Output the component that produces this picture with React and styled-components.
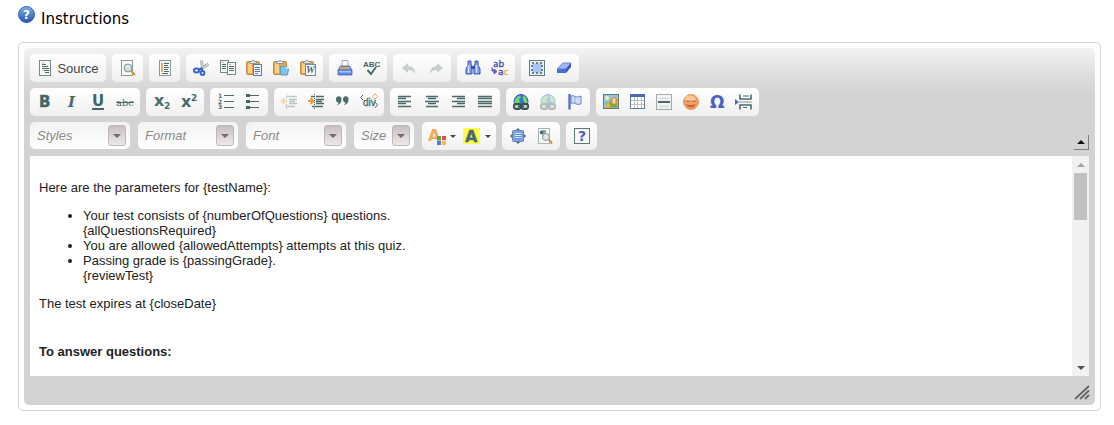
import React from "react";
import styled, { createGlobalStyle } from "styled-components";

const teal = "#4b6b6b";
const darkTeal = "#426565";
const sans = '"DejaVu Sans", Verdana, sans-serif';

const Icon = ({ children, wide, faded }) => (
  <svg
    width={wide ? 18 : 16}
    height="16"
    viewBox={wide ? "0 0 18 16" : "0 0 16 16"}
    opacity={faded ? 0.35 : 1}
    aria-hidden="true"
  >
    {children}
  </svg>
);

const Lines = ({ d, color = teal, w = 1 }) => (
  <path d={d} stroke={color} strokeWidth={w} fill="none" />
);

const Page = ({ x = 2, y = 0, w = 12, h = 16, stroke = "#8a9a9a" }) => (
  <rect x={x + 0.5} y={y + 0.5} width={w - 1} height={h - 1} fill="#f4f8f8" stroke={stroke} />
);

const Clipboard = () => (
  <>
    <rect x="0.5" y="1.5" width="13" height="13" rx="1.5" fill="#e8a44c" stroke="#c98a3c" />
    <path d="M2 3h4v10H2z" fill="#f9cf8f" />
    <path d="M3.5 3.500V1.500h1.500q2-2.500 4 0h1.500v2z" fill="#dfe3e6" stroke="#7f8c8c" strokeWidth="0.8" />
  </>
);

const Globe = () => (
  <>
    <circle cx="8" cy="7.5" r="7" fill="#3d6fd0" stroke="#34559b" />
    <path d="M1.500 8q0-5 5.500-6.500l1 2-2 2 1 2-2 3H2z" fill="#67d86a" />
    <path d="M10 1l3.500 3 1 4-2 2-2.500-4z" fill="#67d86a" />
    <rect x="0.8" y="10" width="7" height="5" rx="2.2" fill="#b9c6c6" stroke="#37504f" strokeWidth="1.8" />
    <rect x="8.2" y="10" width="7" height="5" rx="2.2" fill="#b9c6c6" stroke="#37504f" strokeWidth="1.8" />
    <path d="M5 12.500h6" stroke="#37504f" strokeWidth="1.8" />
  </>
);

const icons = {
  source: (
    <Icon>
      <Page x={2} w={12} stroke="#788b8b" />
      <Lines d="M5 4.500h4M5 6.500h6M5 8.500h7M7 10.500h5M8 12.500h4" />
      <Lines d="M5 3h2M5 10.500h1" color="#d9a45b" />
    </Icon>
  ),
  preview: (
    <Icon>
      <Page x={1} w={12} />
      <circle cx="8" cy="8" r="4" fill="#d3dadb" stroke="#87989b" />
      <path d="M6.500 7q1.500-2 3 0" stroke="#fff" fill="none" />
      <path d="M11 11l4 4" stroke="#cf8b3a" strokeWidth="2" />
    </Icon>
  ),
  templates: (
    <Icon>
      <Page x={2} w={12} />
      <Lines d="M7 3.500h5M7 5.500h4M7 7.500h5M7 9.500h4M7 11.500h5M5 13.500h6" />
      <Lines d="M5 3v9" color="#efa95a" w={2} />
    </Icon>
  ),
  cut: (
    <Icon>
      <path d="M8.500 0.500l1 7.500M15.500 4L7 9.500" stroke="#9ea8ab" strokeWidth="3" fill="none" />
      <path d="M8.500 1l1 7M15 4.500L8 9" stroke="#dde2e3" strokeWidth="1.2" fill="none" />
      <ellipse cx="3.500" cy="10.5" rx="2.600" ry="1.900" stroke="#3b64cc" strokeWidth="2" fill="none" />
      <ellipse cx="9.500" cy="13" rx="1.900" ry="2" stroke="#3b64cc" strokeWidth="2" fill="none" />
      <path d="M5.500 9.500l3.500-1v3" stroke="#3b64cc" strokeWidth="2" fill="none" />
    </Icon>
  ),
  copy: (
    <Icon>
      <Page x={0} y={0} w={9} h={13} stroke="#738787" />
      <Lines d="M2 4.500h4M2 6.500h4M2 8.500h4" />
      <Page x={7} y={2} w={9} h={13} stroke="#738787" />
      <Lines d="M9 6.500h5M9 8.500h5M9 10.500h5" />
      <Lines d="M2 2.500h2M9 4.500h2" color="#e6aa61" />
    </Icon>
  ),
  paste: (
    <Icon>
      <Clipboard />
      <rect x="7.5" y="4.5" width="8" height="11" fill="#f7f9ff" stroke="#5476c9" />
      <Lines d="M9 7.500h5M9 9.500h5M9 11.500h5M9 13.500h3" color="#5773b8" />
    </Icon>
  ),
  pasteText: (
    <Icon>
      <Clipboard />
      <path d="M7 7l5-1 3.500 3-1 6H8z" fill="#7dc5e8" stroke="#539dc8" />
      <path d="M12 6l1 3h3" fill="#c4e7f7" />
    </Icon>
  ),
  pasteWord: (
    <Icon>
      <Clipboard />
      <rect x="5.5" y="4.5" width="10" height="11" fill="#f7f9ff" stroke="#7187b5" />
      <text x="6" y="13" fontFamily="Liberation Serif, serif" fontWeight="bold" fontStyle="italic" fontSize="10" fill={teal}>W</text>
    </Icon>
  ),
  print: (
    <Icon>
      <path d="M5 7V0.500h6V7" fill="#f7f9fb" stroke="#a4aebd" />
      <path d="M3.500 6h9l2.500 4v5H1v-5z" fill="#5c87e6" stroke="#4267bd" strokeWidth="0.8" />
      <path d="M3 7h10v2H3z" fill="#f0a545" />
      <path d="M2 11h12v1.500H2z" fill="#a6c4ff" />
    </Icon>
  ),
  spell: (
    <Icon wide>
      <text x="0" y="7" fontFamily="Liberation Sans, sans-serif" fontWeight="bold" fontSize="8" fill={darkTeal}>ABC</text>
      <path d="M4.500 10l3.500 4 5-7" stroke={teal} strokeWidth="2" fill="none" />
    </Icon>
  ),
  undo: (
    <Icon faded>
      <path d="M1 8l6-5v3q7 0 7 8-2-4-7-4v3z" fill="#6d8080" />
    </Icon>
  ),
  redo: (
    <Icon faded>
      <path d="M15 8L9 3v3q-7 0-7 8 2-4 7-4v3z" fill="#6d8080" />
    </Icon>
  ),
  find: (
    <Icon>
      <path d="M3 1h3v3l1 2v8H1V9l2-4zM10 1h3v4l2 4v5H9V6l1-2z" fill="#7c9df0" stroke="#3a56ac" />
      <path d="M6 6h4v3H6z" fill="#3a56ac" />
      <path d="M3.500 5v8M11.500 5v8" stroke="#d3e1ff" strokeWidth="1.5" />
    </Icon>
  ),
  replace: (
    <Icon wide>
      <text x="2" y="7" fontFamily={sans} fontSize="9" fill="#4549b5" stroke="#4549b5" strokeWidth="0.3">ab</text>
      <text x="7" y="15" fontFamily={sans} fontSize="9" fill="#4549b5" stroke="#4549b5" strokeWidth="0.3">a<tspan fill="#f0a545" stroke="#f0a545">c</tspan></text>
      <path d="M1 7.500v3.500h2M3 9l3 2.500L3 14z" stroke="#5b5fc2" fill="#5b5fc2" />
    </Icon>
  ),
  selectAll: (
    <Icon>
      <rect x="0.5" y="0.5" width="15" height="15" fill="#e9eeee" stroke="#637c7c" />
      <rect x="3.5" y="3.5" width="9" height="9" fill="#a9c4f4" />
      <rect x="3" y="3" width="10" height="10" fill="none" stroke="#405f78" strokeWidth="1.5" strokeDasharray="2 2" />
    </Icon>
  ),
  eraser: (
    <Icon>
      <path d="M1 9l6-6h8l-5 6z" fill="#9bb9ff" stroke="#5875c8" strokeWidth="0.8" />
      <path d="M1 9h9v4H1z" fill="#4c6ed3" />
      <path d="M10 9l5-6v4l-5 6z" fill="#3856b2" />
    </Icon>
  ),
  bold: (
    <Icon>
      <text x="2" y="13" fontFamily={sans} fontWeight="bold" fontSize="15" fill={darkTeal} stroke={darkTeal} strokeWidth="0.4">B</text>
    </Icon>
  ),
  italic: (
    <Icon>
      <text x="4" y="13" fontFamily="DejaVu Serif, serif" fontStyle="italic" fontWeight="bold" fontSize="15" fill={teal}>I</text>
    </Icon>
  ),
  underline: (
    <Icon>
      <text x="2" y="12" fontFamily={sans} fontWeight="bold" fontSize="15" fill={darkTeal}>U</text>
      <path d="M2 14h12v2H2z" fill={darkTeal} />
    </Icon>
  ),
  strike: (
    <Icon wide>
      <text x="0" y="12" fontFamily="DejaVu Serif, serif" fontSize="10" fill={teal}>abc</text>
      <Lines d="M0 8.500h18" />
    </Icon>
  ),
  sub: (
    <Icon>
      <text x="0" y="12" fontFamily={sans} fontWeight="bold" fontSize="16" fill={teal}>x</text>
      <text x="10" y="15" fontFamily={sans} fontWeight="bold" fontSize="9" fill={teal}>2</text>
    </Icon>
  ),
  sup: (
    <Icon>
      <text x="0" y="13" fontFamily={sans} fontWeight="bold" fontSize="16" fill={teal}>x</text>
      <text x="10" y="7" fontFamily={sans} fontWeight="bold" fontSize="9" fill={teal}>2</text>
    </Icon>
  ),
  numbered: (
    <Icon>
      <text fontFamily={sans} fontSize="6" fontWeight="bold" fill={teal}>
        <tspan x="0" y="4">1</tspan>
        <tspan x="0" y="10">2</tspan>
        <tspan x="0" y="15">3</tspan>
      </text>
      <Lines d="M6 1.500h10M6 7.500h10M6 13.500h10" />
    </Icon>
  ),
  bulleted: (
    <Icon>
      <path d="M1 0h4v3H1zM1 6h4v3H1zM1 12h4v3H1z" fill={darkTeal} />
      <Lines d="M5 1.500h9M5 7.500h9M5 13.500h9" />
    </Icon>
  ),
  outdent: (
    <Icon wide faded>
      <Lines d="M7 2.500h10M9 5.500h8M9 7.500h6M9 9.500h8M5 12.500h10" w={1.5} />
      <path d="M6.500 0v15" stroke={teal} strokeDasharray="1 1" />
      <path d="M7 7H1.500M4.500 4L1.500 7l3 3" stroke="#f09a35" strokeWidth="1.8" fill="none" />
    </Icon>
  ),
  indent: (
    <Icon wide>
      <Lines d="M4 2.500h4M9 2.500h8M9 5.500h8M9 7.500h6M9 9.500h8M5 12.500h11" w={1.5} />
      <path d="M7.500 0v15" stroke={teal} strokeDasharray="1 1" />
      <path d="M1 7h5M3.500 4L6.500 7l-3 3" stroke="#f09a35" strokeWidth="1.8" fill="none" />
    </Icon>
  ),
  quote: (
    <Icon>
      <path d="M2 5.500a2.800 2.800 0 1 1 5.500 0q0 4.500-5 6 2-1.500 2-3-2.500 0-2.500-3zM9 5.500a2.800 2.800 0 1 1 5.500 0q0 4.500-5 6 2-1.500 2-3-2.500 0-2.500-3z" fill={teal} />
    </Icon>
  ),
  div: (
    <Icon wide>
      <path d="M3 1L0.500 3.500 3 6M15 8l2.500 3-2.500 3" stroke={teal} fill="none" />
      <text x="3" y="12" fontFamily="Liberation Sans, sans-serif" fontSize="10" fill={teal} stroke={teal} strokeWidth="0.3">div</text>
      <path d="M15 0l2.500 2.500L15 5l-2.500-2.500z" stroke="#f0a545" fill="#fff" />
    </Icon>
  ),
  left: <Icon><Lines d="M1 2.500h13M1 4.500h8M1 7.500h13M1 9.500h8M1 12.500h13" w={1.5} /></Icon>,
  center: <Icon><Lines d="M2 2.500h12M4 4.500h8M1 7.500h14M4 9.500h8M2 12.500h12" w={1.5} /></Icon>,
  right: <Icon><Lines d="M2 2.500h13M7 4.500h8M2 7.500h13M7 9.500h8M2 12.500h13" w={1.5} /></Icon>,
  justify: <Icon><Lines d="M1 2.500h14M1 4.500h14M1 7.500h14M1 9.500h14M1 12.500h14" w={1.5} /></Icon>,
  link: <Icon><Globe /></Icon>,
  unlink: <Icon faded><Globe /></Icon>,
  anchor: (
    <Icon>
      <path d="M2.500 0v15.500" stroke="#5672c9" strokeWidth="2.4" />
      <path d="M4 2q2-1 4 0.500t6-0.500v8q-4 1-6-0.500t-4 0z" fill="#cfdcf8" stroke="#6e83c6" />
      <path d="M8 2.500v7" stroke="#9dafe0" />
    </Icon>
  ),
  image: (
    <Icon>
      <rect x="0.5" y="0.500" width="15" height="14" fill="#8bc7f2" stroke="#687b62" />
      <path d="M2 9q5-3 12 0v4.500H2z" fill="#6eab46" />
      <path d="M7.500 6.500L11 3l3.500 3.500H13V10H9V6.500z" fill="#f3dda4" stroke="#df8740" strokeWidth="1.2" />
      <circle cx="4" cy="4" r="2" fill="#fff0a0" />
      <path d="M2 10l4-2 2 5.500H2z" fill="#f0b040" />
    </Icon>
  ),
  table: (
    <Icon>
      <rect x="0.5" y="0.500" width="14" height="14" fill="#fff" stroke="#687b88" />
      <path d="M0 0h15v3H0z" fill="#4867b8" />
      <Lines d="M4.500 3v11M7.500 3v11M11.500 3v11M1 6.500h13M1 10.500h13" color="#b9c2c7" />
    </Icon>
  ),
  rule: (
    <Icon>
      <rect x="0.5" y="0.500" width="15" height="15" fill="#f0f1f1" stroke="#a2aaaa" />
      <path d="M2 7h12v2H2z" fill={teal} />
      <Lines d="M3 4.500h10M3 12.500h10" color="#d2d7d7" />
    </Icon>
  ),
  smiley: (
    <Icon>
      <circle cx="8" cy="8" r="7.5" fill="#f7a05a" stroke="#e5955c" />
      <ellipse cx="7" cy="4" rx="5" ry="2.5" fill="#ffc58b" />
      <path d="M3 6.500h4M9 6.500h4" stroke="#fff" strokeWidth="2" />
      <path d="M3 7h4M9 7h4" stroke="#594236" />
      <path d="M3 10q5 2 10 0-1.500 3.500-5 3.500T3 10z" fill="#c46548" />
    </Icon>
  ),
  special: (
    <Icon>
      <text x="1" y="14" fontFamily={sans} fontWeight="bold" fontSize="17" fill="#4960c4">Ω</text>
    </Icon>
  ),
  pageBreak: (
    <Icon wide>
      <path d="M5 0.500V5h11V0.500M5 15.500V11h11v4.500" stroke={teal} strokeWidth="1.6" fill="#fff" />
      <path d="M8 2h6M8 13.500h4" stroke={teal} />
      <path d="M4 8h13" stroke="#869696" />
      <path d="M0 5v6l4-3z" fill="#4968ca" />
    </Icon>
  ),
  textColor: (
    <Icon wide>
      <text x="0" y="13" fontFamily={sans} fontWeight="bold" fontSize="16" fill="#f2aa5b">A</text>
      <path d="M9 8h4v4H9z" fill="#53a94b" />
      <path d="M14 8h4v4h-4z" fill="#e24a52" />
      <path d="M9 13h4v4H9z" fill="#4e79e8" />
      <path d="M14 13h4v4h-4z" fill="#f1ba42" />
    </Icon>
  ),
  bgColor: (
    <Icon wide>
      <path d="M0 0h17v16H0z" fill="#ffff4b" />
      <text x="2" y="14" fontFamily={sans} fontWeight="bold" fontSize="16" fill={teal} stroke={teal} strokeWidth="0.4">A</text>
    </Icon>
  ),
  maximize: (
    <Icon>
      <path d="M8 0l3 3H5zM8 16l3-3H5zM0 8l3-3v6zM16 8l-3-3v6z" fill={teal} />
      <rect x="2.5" y="2.500" width="11" height="11" rx="1" fill="#77a4fb" stroke="#6b84a4" />
      <rect x="5" y="5" width="6" height="6" fill="#dce9ff" />
      <Lines d="M5 6.500h6M5 8.500h6M5 10.500h6" color="#628ddd" />
    </Icon>
  ),
  blocks: (
    <Icon>
      <Page x={1} w={12} stroke="#aab4b4" />
      <path d="M4 3h5M6 3v5M8 3v5" stroke={teal} fill="none" />
      <circle cx="4.500" cy="4.500" r="1.8" fill={teal} />
      <circle cx="9" cy="9" r="3.500" fill="#e0e4e4" stroke="#87989b" />
      <path d="M12 12l3 3.500" stroke="#cf8b3a" strokeWidth="2" />
    </Icon>
  ),
  about: (
    <Icon>
      <rect x="0.5" y="0.500" width="15" height="15" fill="#f5f7fb" stroke="#627979" />
      <text x="4" y="13" fontFamily={sans} fontWeight="bold" fontSize="14" fill="#505bc0">?</text>
    </Icon>
  ),
};

const rows = [
  [
    [["preview", "Preview"]],
    [["templates", "Templates"]],
    [["cut", "Cut"], ["copy", "Copy"], ["paste", "Paste"], ["pasteText", "Paste as plain text"], ["pasteWord", "Paste from Word"]],
    [["print", "Print"], ["spell", "Check Spelling"]],
    [["undo", "Undo"], ["redo", "Redo"]],
    [["find", "Find"], ["replace", "Replace"]],
    [["selectAll", "Select All"], ["eraser", "Remove Format"]],
  ],
  [
    [["bold", "Bold"], ["italic", "Italic"], ["underline", "Underline"], ["strike", "Strike Through"]],
    [["sub", "Subscript"], ["sup", "Superscript"]],
    [["numbered", "Numbered List"], ["bulleted", "Bulleted List"]],
    [["outdent", "Decrease Indent"], ["indent", "Increase Indent"], ["quote", "Block Quote"], ["div", "Create Div Container"]],
    [["left", "Align Left"], ["center", "Center"], ["right", "Align Right"], ["justify", "Justify"]],
    [["link", "Link"], ["unlink", "Unlink"], ["anchor", "Anchor"]],
    [["image", "Image"], ["table", "Table"], ["rule", "Horizontal Line"], ["smiley", "Smiley"], ["special", "Special Character"], ["pageBreak", "Page Break"]],
  ],
  [
    [["maximize", "Maximize"], ["blocks", "Show Blocks"]],
    [["about", "About"]],
  ],
];

const combos = [
  ["Styles", 100],
  ["Format", 100],
  ["Font", 100],
  ["Size", 60],
];

// total width of a group by its number of buttons
const groupWidth = { 1: 31, 2: 58, 3: 84, 4: 110, 5: 137, 6: 163 };

const disabled = ["undo", "redo", "outdent", "unlink"];

const Groups = ({ groups }) =>
  groups.map((group) => (
    <Group key={group[0][0]} $width={groupWidth[group.length]}>
      {group.map(([name, label]) => (
        <ToolButton key={name} type="button" aria-label={label} disabled={disabled.includes(name)}>
          {icons[name]}
        </ToolButton>
      ))}
    </Group>
  ));

const Triangle = ({ up, color, size = 8 }) => (
  <svg width={size} height={size / 2} viewBox="0 0 8 4" aria-hidden="true">
    <path d={up ? "M0 4l4-4 4 4z" : "M0 0h8l-4 4z"} fill={color} />
  </svg>
);

const Toolbar = () => (
  <ToolbarWrap>
    <Rows role="toolbar" aria-label="Editor toolbar">
      <Row>
        <Group $width={76}>
          <SourceButton type="button">{icons.source}Source</SourceButton>
        </Group>
        <Groups groups={rows[0]} />
      </Row>
      <Row>
        <Groups groups={rows[1]} />
      </Row>
      <Row>
        {combos.map(([name, width]) => (
          <Combo key={name} $width={width}>
            <select aria-label={name}>
              <option>{name}</option>
            </select>
            <Arrow><Triangle color="#766b6b" /></Arrow>
          </Combo>
        ))}
        <Group $width={74}>
          <ColorButton type="button" aria-label="Text Color">{icons.textColor}<Triangle size={6} color="#444" /></ColorButton>
          <ColorButton type="button" aria-label="Background Color">{icons.bgColor}<Triangle size={6} color="#444" /></ColorButton>
        </Group>
        <Groups groups={rows[2]} />
      </Row>
    </Rows>
    <Collapse type="button" aria-label="Collapse Toolbar"><Triangle up color="#111" /></Collapse>
  </ToolbarWrap>
);

const App = () => (
  <>
    <GlobalStyle />
    <Header>
      <svg width="17" height="17" viewBox="0 0 17 17" aria-hidden="true">
        <defs>
          <linearGradient id="help" x1="0" y1="0" x2="0" y2="1">
            <stop offset="0" stopColor="#7fb0ea" />
            <stop offset="1" stopColor="#2553ae" />
          </linearGradient>
        </defs>
        <circle cx="8.5" cy="8.5" r="8" fill="url(#help)" stroke="#3a63b0" />
        <text x="5" y="13" fontFamily={sans} fontWeight="bold" fontSize="12" fill="#fff">?</text>
      </svg>
      <Title id="instructions">Instructions</Title>
    </Header>
    <Frame>
      <Editor>
        <Toolbar />
        <Contents>
          <Body contentEditable suppressContentEditableWarning role="textbox" aria-multiline="true" aria-labelledby="instructions">
            <p>Here are the parameters for {"{testName}"}:</p>
            <ul>
              <li>Your test consists of {"{numberOfQuestions}"} questions.<br />{"{allQuestionsRequired}"}</li>
              <li>You are allowed {"{allowedAttempts}"} attempts at this quiz.</li>
              <li>Passing grade is {"{passingGrade}"}.<br />{"{reviewTest}"}</li>
            </ul>
            <p>The test expires at {"{closeDate}"}</p>
            <h4>To answer questions:</h4>
          </Body>
          <Scrollbar>
            <ScrollButton type="button" aria-label="Scroll up"><Triangle up color="#a3a3a3" /></ScrollButton>
            <Thumb />
            <ScrollButton type="button" aria-label="Scroll down"><Triangle color="#505050" /></ScrollButton>
          </Scrollbar>
        </Contents>
        <Footer>
          <svg width="14" height="13" viewBox="0 0 14 13" aria-hidden="true">
            <path d="M0 13L14 0M5 13l9-8.500M10 13l4-4" stroke="#666" strokeWidth="1.8" />
          </svg>
        </Footer>
      </Editor>
    </Frame>
  </>
);

const GlobalStyle = createGlobalStyle`
  * {
    box-sizing: border-box;
  }
  body {
    margin: 0;
    background: #fff;
    font-family: "Liberation Sans", Arial, sans-serif;
    font-size: 13px;
  }
  button, select {
    margin: 0;
    padding: 0;
    border: 0;
    background: none;
    font: inherit;
  }
  svg {
    display: block;
    flex-shrink: 0;
    overflow: visible;
  }
`
const Header = styled.header`
  display: flex;
  align-items: flex-start;
  gap: 6px;
  padding: 6px 18px 10px;
`
const Title = styled.span`
  font-family: "DejaVu Sans", Verdana, sans-serif;
  font-size: 15px;
  line-height: 26px;
  color: #000;
`
const Frame = styled.main`
  margin: 0 13px 14px 18px;
  padding: 5px;
  border: 1px solid #d3d3d3;
  border-radius: 5px;
`
const Editor = styled.div`
  padding: 6px 6px 0;
  border-radius: 5px;
  background: #d3d3d3 linear-gradient(#f2f2f2, #d3d3d3) 0 0 / 100% 44px no-repeat;
`
const ToolbarWrap = styled.div`
  display: flex;
  align-items: flex-end;
  justify-content: space-between;
  padding-bottom: 6px;
`
const Rows = styled.div`
  display: flex;
  flex-direction: column;
  gap: 6px;
`
const Row = styled.div`
  display: flex;
  gap: 6px;
`
const Group = styled.div`
  display: flex;
  width: ${({ $width }) => $width}px;
  height: 28px;
  padding: 0 2px;
  border-radius: 5px;
  background: linear-gradient(#fff, #f0f0f0);
`
const ToolButton = styled.button`
  display: flex;
  flex: 1;
  align-items: center;
  justify-content: center;
`
const SourceButton = styled(ToolButton)`
  gap: 4px;
  color: #474747;
`
const ColorButton = styled(ToolButton)`
  gap: 4px;
`
const Combo = styled.div`
  display: flex;
  align-items: center;
  width: ${({ $width }) => $width}px;
  height: 27px;
  margin-right: 2px;
  padding: 0 4px 0 7px;
  border-radius: 5px;
  background: linear-gradient(#f3f3f3, #fff);

  select {
    flex: 1;
    min-width: 0;
    height: 20px;
    appearance: none;
    font-style: italic;
    color: #8a8a8a;
  }
`
const Arrow = styled.span`
  display: flex;
  align-items: center;
  justify-content: center;
  width: 18px;
  height: 21px;
  border: 1px solid #c0b8b8;
  border-radius: 3px;
  background: linear-gradient(#c8c0c0, #eee8e8);
`
const Collapse = styled.button`
  display: flex;
  align-items: center;
  justify-content: center;
  width: 15px;
  height: 15px;
  border-right: 1px solid #7e7e7e;
  border-bottom: 1px solid #7e7e7e;
`
const Contents = styled.div`
  display: flex;
  background: #fff;
`
const Body = styled.div`
  flex: 1;
  padding: 24px 9px 17px;
  line-height: 15px;
  color: #222;

  p, ul {
    margin: 0 0 13px;
  }
  ul {
    padding-left: 44px;
  }
  h4 {
    margin: 33px 0 0;
    font-size: 13px;
  }
`
const Scrollbar = styled.div`
  display: flex;
  flex-direction: column;
  width: 17px;
  background: #f1f1f1;
`
const ScrollButton = styled.button`
  display: flex;
  align-items: center;
  justify-content: center;
  height: 17px;

  &:last-child {
    margin-top: auto;
  }
`
const Thumb = styled.div`
  height: 47px;
  margin: 0 2px;
  background: #c1c1c1;
`
const Footer = styled.div`
  display: flex;
  justify-content: flex-end;
  height: 29px;
  padding-top: 10px;
`

export default App;
